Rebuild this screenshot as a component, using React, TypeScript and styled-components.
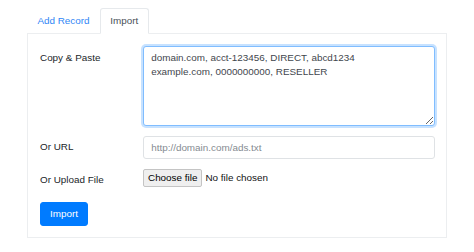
import React, { useEffect, useRef } from "react";
import styled, { createGlobalStyle } from "styled-components";

const GlobalStyle = createGlobalStyle`
  body {
    margin: 0;
    background: #fff;
    font-family: "Liberation Sans", Arial, sans-serif;
    color: #212529;
  }
`;

const Page = styled.div`
  width: 420px;
  padding: 8px 0 0 27px;
  font-size: 9.9px;
  line-height: 14.4px;
`;

const Tabs = styled.nav`
  display: flex;
  position: relative;
  z-index: 1;
`;

const Tab = styled.a<{ $active?: boolean }>`
  display: block;
  padding: 4.8px 9.4px;
  margin-bottom: -1px;
  border: 1px solid ${(p) => (p.$active ? "#e6e9ec" : "transparent")};
  border-bottom-color: ${(p) => (p.$active ? "#fff" : "transparent")};
  border-radius: 3px 3px 0 0;
  background: ${(p) => (p.$active ? "#fff" : "transparent")};
  color: ${(p) => (p.$active ? "#495057" : "#2f86f6")};
  cursor: pointer;
`;

const Card = styled.div`
  border: 1px solid #eceef0;
  padding: 12px 11px 11px 12px;
  display: flex;
  flex-direction: column;
  gap: 9.6px;
`;

const Row = styled.div`
  display: grid;
  grid-template-columns: 103px 1fr;
  align-items: start;
`;

const Label = styled.label`
  padding: 4.6px 0;
  color: #212529;
`;

const TextArea = styled.textarea`
  box-sizing: border-box;
  display: block;
  width: 100%;
  height: 80px;
  margin: 0;
  padding: 3.6px 7.2px;
  font-family: inherit;
  font-size: 9.9px;
  line-height: 14.4px;
  color: #3f464d;
  border: 1px solid #80bdff;
  border-radius: 3px;
  box-shadow: 0 0 0 2px rgba(0, 123, 255, 0.22);
  outline: none;
  resize: vertical;
`;

const Input = styled.input`
  box-sizing: border-box;
  display: block;
  width: 100%;
  height: 23px;
  margin: 0;
  padding: 3.6px 7.2px;
  font-family: inherit;
  font-size: 9.9px;
  color: #495057;
  border: 1px solid #dfe2e5;
  border-radius: 3px;
  outline: none;
  &::placeholder {
    color: #858b91;
  }
`;

const FileField = styled.label`
  display: flex;
  align-items: center;
  gap: 3px;
  color: #111;
  cursor: pointer;

  input {
    display: none;
  }
`;

const FileButton = styled.span`
  box-sizing: border-box;
  display: inline-flex;
  align-items: center;
  height: 18px;
  padding: 0 4px;
  background: #efefef;
  border: 1px solid #c4c4c4;
  border-radius: 2px;
  color: #000;
`;

const Button = styled.button`
  align-self: flex-start;
  margin: 0;
  padding: 3.6px 9px;
  font-family: inherit;
  font-size: 9.9px;
  line-height: 14.4px;
  color: #fff;
  background: #007bff;
  border: 1px solid #007bff;
  border-radius: 3px;
  cursor: pointer;
`;

export default function App() {
  const ref = useRef<HTMLTextAreaElement>(null);

  useEffect(() => {
    const el = ref.current;
    if (el) {
      el.focus();
      el.setSelectionRange(el.value.length, el.value.length);
    }
  }, []);

  return (
    <>
      <GlobalStyle />
      <Page>
        <Tabs>
          <Tab>Add Record</Tab>
          <Tab $active>Import</Tab>
        </Tabs>
        <Card>
          <Row>
            <Label>Copy &amp; Paste</Label>
            <TextArea
              ref={ref}
              defaultValue={"domain.com, acct-123456, DIRECT, abcd1234\nexample.com, 0000000000, RESELLER"}
            />
          </Row>
          <Row>
            <Label>Or URL</Label>
            <Input type="text" placeholder="http://domain.com/ads.txt" />
          </Row>
          <Row>
            <Label>Or Upload File</Label>
            <FileField>
              <input type="file" />
              <FileButton>Choose file</FileButton>
              <span>No file chosen</span>
            </FileField>
          </Row>
          <Button>Import</Button>
        </Card>
      </Page>
    </>
  );
}
